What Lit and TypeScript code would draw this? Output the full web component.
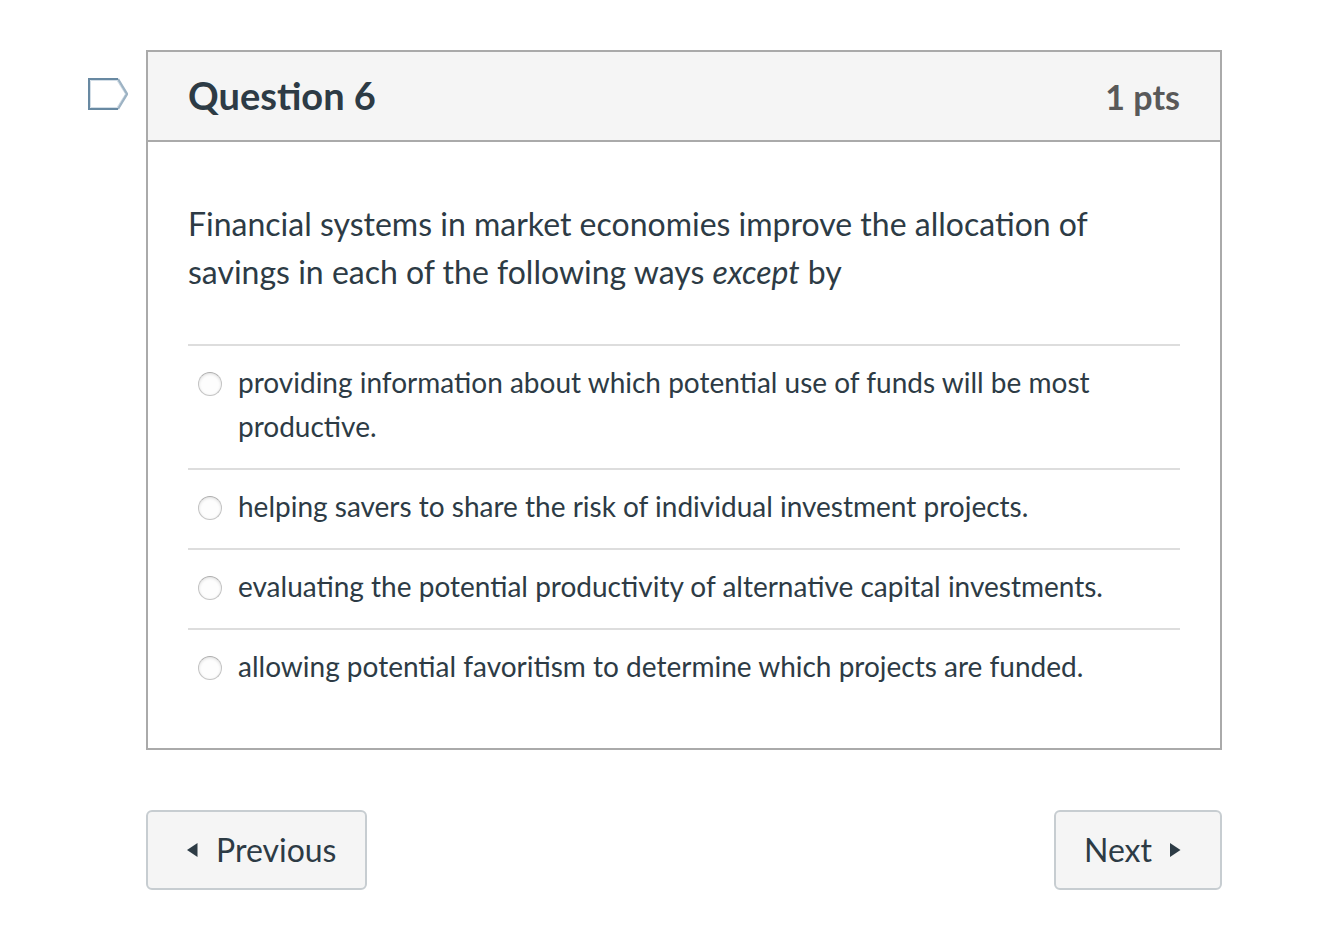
import { LitElement, html, css } from "lit";
import { customElement, state } from "lit/decorators.js";

@customElement("app-root")
export class AppRoot extends LitElement {
  static styles = css`
    :host {
      display: block;
      font-family: Lato, "Liberation Sans", sans-serif;
      color: #2d3b45;
      background: #fff;
    }
    * { box-sizing: border-box; }
    .page {
      display: grid;
      grid-template-columns: 40px minmax(0, 1fr);
      column-gap: 18px;
      padding: 50px 96px 44px 88px;
    }
    .flag {
      align-self: start;
      margin: 28px 0 0;
      padding: 0;
      border: 0;
      background: none;
      height: 32px;
      cursor: pointer;
    }
    .flag svg { display: block; }
    .card { border: 2px solid #aaa; margin: 0; }
    .head {
      display: flex;
      justify-content: space-between;
      align-items: baseline;
      padding: 19px 40px;
      background: #f5f5f5;
      border-bottom: 2px solid #aaa;
    }
    h1 { margin: 0; font-size: 38px; line-height: 48px; font-weight: 700; }
    .points { font-size: 34px; line-height: 48px; font-weight: 700; color: #595959; }
    .body { padding: 58px 40px 40px; }
    .prompt { margin: 0 0 48px; font-size: 32px; line-height: 48px; }
    .answers { border: 0; margin: 0; padding: 0; min-width: 0; }
    .answer {
      display: flex;
      gap: 16px;
      padding: 14px 10px 20px;
      border-top: 2px solid #ddd;
      font-size: 28px;
      line-height: 44px;
    }
    .answer input {
      appearance: none;
      flex: none;
      width: 24px;
      height: 24px;
      margin: 12px 0 0;
      border: 1px solid #c4c4c4;
      border-top-color: #adadad;
      border-radius: 50%;
      background: #fdfdfd;
      box-shadow: inset 0 1px 3px #dedede;
    }
    .answer input:checked { background: radial-gradient(#2d3b45 35%, #fff 40%); }
    .nav {
      grid-column: 2;
      display: flex;
      justify-content: space-between;
      margin-top: 60px;
    }
    .nav button {
      display: flex;
      align-items: center;
      gap: 18px;
      padding: 14px 28px;
      border: 2px solid #c7cdd1;
      border-radius: 6px;
      background: #f5f5f5;
      color: inherit;
      font: inherit;
      font-size: 32px;
      line-height: 48px;
      cursor: pointer;
    }
    .nav .prev { padding-left: 39px; padding-right: 29px; }
    .nav .next { padding-right: 39px; }
  `;

  @state() private choice = -1;

  private answers = [
    "providing information about which potential use of funds will be most productive.",
    "helping savers to share the risk of individual investment projects.",
    "evaluating the potential productivity of alternative capital investments.",
    "allowing potential favoritism to determine which projects are funded.",
  ];

  render() {
    return html`
      <main class="page">
        <button class="flag" aria-label="Flag question">
          <svg width="40" height="32" viewBox="0 0 40 32" fill="none">
            <path d="M2.5 2.5H29L37.5 16L29 29.5H2.5Z" stroke="#d3dee7" stroke-width="1" />
            <path d="M30 1L39 16L30 31" stroke="#9db3c4" stroke-width="2.4" />
            <path d="M30 1H1V31H30" stroke="#6889a2" stroke-width="2" />
          </svg>
        </button>
        <section class="card">
          <header class="head">
            <h1>Question 6</h1>
            <span class="points">1 pts</span>
          </header>
          <div class="body">
            <p class="prompt" id="prompt">
              Financial systems in market economies improve the allocation of
              savings in each of the following ways <em>except</em> by
            </p>
            <fieldset class="answers" aria-labelledby="prompt">
              ${this.answers.map(
                (text, i) => html`
                  <label class="answer" for="answer-${i}">
                    <input type="radio" name="answer" id="answer-${i}"
                      .checked=${this.choice === i}
                      @change=${() => (this.choice = i)} />
                    <span>${text}</span>
                  </label>
                `
              )}
            </fieldset>
          </div>
        </section>
        <nav class="nav">
          <button class="prev">
            <svg width="11" height="14" viewBox="0 0 11 14" aria-hidden="true"><path d="M10.500 0V14L0 7Z" fill="#2d3b45" /></svg>
            Previous
          </button>
          <button class="next">
            Next
            <svg width="11" height="14" viewBox="0 0 11 14" aria-hidden="true"><path d="M0 0V14L10.500 7Z" fill="#2d3b45" /></svg>
          </button>
        </nav>
      </main>
    `;
  }
}
